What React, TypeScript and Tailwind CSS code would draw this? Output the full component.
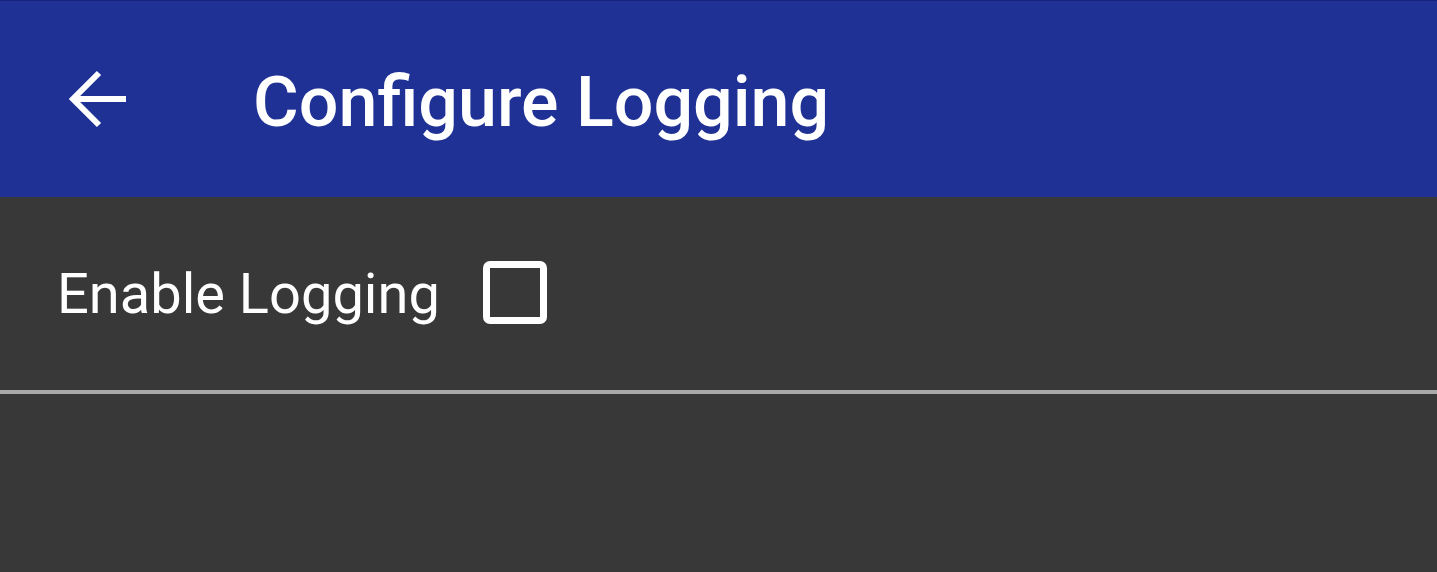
import React from "react";

export default function App() {
  return (
    <div className="w-[1437px] h-[572px] bg-[#383838] flex flex-col overflow-hidden" style={{ fontFamily: "Roboto, 'Noto Sans', sans-serif" }}>
      <div className="h-[197px] bg-[#1f3194] border-t border-[#15237a] flex items-center shrink-0">
        <div className="w-[253px] pl-[67px] flex items-center">
          <svg width="62" height="60" viewBox="0 0 62 60">
            <path d="M59 30 H6 M32 4 L6 30 L32 56" stroke="white" strokeWidth="6" fill="none" />
          </svg>
        </div>
        <div className="text-white text-[70px] font-medium leading-none mt-[6px]">Configure Logging</div>
      </div>
      <div className="h-[193px] flex items-center pl-[57px] shrink-0">
        <span className="text-white text-[56px] leading-none">Enable Logging</span>
        <div className="ml-[43px] w-[64px] h-[63px] border-[7px] border-white rounded-[7px] mt-[-2px]"></div>
      </div>
      <div className="h-[4px] bg-[#aaaaaa] shrink-0"></div>
    </div>
  );
}
